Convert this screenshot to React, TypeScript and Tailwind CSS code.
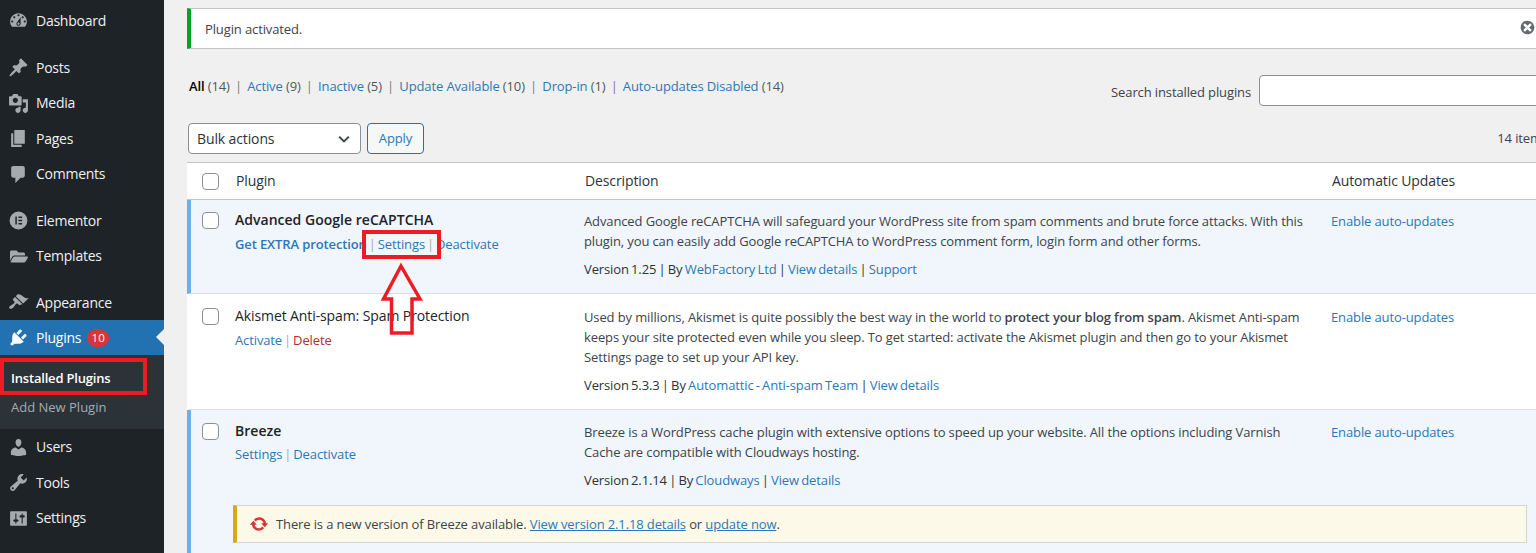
import React from "react";
import { FaFolderOpen } from "react-icons/fa";

const P: Record<string, string> = {
  dashboard: "M3.76 16h12.48c1.1-1.37 1.76-3.11 1.76-5 0-4.42-3.58-8-8-8s-8 3.58-8 8c0 1.89.66 3.63 1.76 5zM10 4c.55 0 1 .45 1 1s-.45 1-1 1-1-.45-1-1 .45-1 1-1zM6 6c.55 0 1 .45 1 1s-.45 1-1 1-1-.45-1-1 .45-1 1-1zm8 0c.55 0 1 .45 1 1s-.45 1-1 1-1-.45-1-1 .45-1 1-1zm-5.37 5.55L12 7v6c0 1.1-.9 2-2 2s-2-.9-2-2c0-.57.24-1.08.63-1.45zM4 10c.55 0 1 .45 1 1s-.45 1-1 1-1-.45-1-1 .45-1 1-1zm12 0c.55 0 1 .45 1 1s-.45 1-1 1-1-.45-1-1 .45-1 1-1zm-5 3c0-.55-.45-1-1-1s-1 .45-1 1 .45 1 1 1 1-.45 1-1z",
  post: "M10.44 3.02l1.82-1.82 6.36 6.35-1.83 1.82c-1.05-.68-2.48-.57-3.41.36l-.75.75c-.92.93-1.04 2.35-.35 3.41l-1.83 1.82-2.41-2.41-2.8 2.79c-.42.42-3.38 2.71-3.8 2.29s1.86-3.39 2.28-3.81l2.79-2.79L4.1 9.36l1.83-1.82c1.05.69 2.48.57 3.4-.36l.75-.75c.93-.92 1.05-2.35.36-3.41z",
  media: "M13 11V4c0-.55-.45-1-1-1h-1.67L9 1H5L3.67 3H2c-.55 0-1 .45-1 1v7c0 .55.45 1 1 1h10c.55 0 1-.45 1-1zM7 4.5c1.38 0 2.5 1.12 2.5 2.5S8.38 9.5 7 9.5 4.5 8.38 4.5 7 5.62 4.5 7 4.5zM14 6h5v10.5c0 1.38-1.12 2.5-2.5 2.5S14 17.88 14 16.5s1.12-2.5 2.5-2.5c.17 0 .34.02.5.05V9h-3V6zm-4 8.05V13h2v3.5c0 1.38-1.12 2.5-2.5 2.5S7 17.88 7 16.5 8.12 14 9.5 14c.17 0 .34.02.5.05z",
  page: "M6 15V2h10v13H6zm-1 1h8v2H3V5h2v11z",
  comments: "M5 2h9c1.1 0 2 .9 2 2v7c0 1.1-.9 2-2 2h-2l-5 5v-5H5c-1.1 0-2-.9-2-2V4c0-1.1.9-2 2-2z",
  appearance: "M14.48 11.06L7.41 3.99l1.5-1.5c.5-.56 2.3-.47 3.51.32 1.21.8 1.43 1.28 2.91 2.1 1.18.64 2.45 1.26 4.45.85zm-.71.71L6.7 4.7 4.93 6.47c-.39.39-.39 1.02 0 1.41l1.06 1.06c.39.39.39 1.03 0 1.42-.6.6-1.43 1.11-2.21 1.69-.35.26-.7.53-1.01.84C1.43 13.23.75 15.08 1.43 15.76c.68.68 2.53 0 3.87-1.34.31-.31.58-.66.84-1.01.58-.78 1.09-1.61 1.69-2.21.39-.39 1.03-.39 1.42 0l1.06 1.06c.39.39 1.02.39 1.41 0z",
  plugins: "M13.11 4.36L9.87 7.6 8 5.73l3.24-3.24c.35-.34 1.05-.2 1.56.32.52.51.66 1.21.31 1.55zm-8 1.77l.91-1.12 9.01 9.01-1.19.84c-.71.71-2.63 1.16-3.82 1.16H6.14L4.9 17.26c-.59.59-1.54.59-2.12 0-.59-.58-.59-1.53 0-2.12l1.24-1.24v-3.88c0-1.13.4-3.19 1.09-3.89zm7.26 3.97l3.24-3.24c.34-.35 1.04-.21 1.55.31.52.51.66 1.21.31 1.55l-3.24 3.25z",
  users: "M10 9.25c-2.27 0-2.73-3.44-2.73-3.44C7 4.02 7.82 2 9.97 2c2.16 0 2.98 2.02 2.71 3.81 0 0-.41 3.44-2.68 3.44zm0 2.57L12.72 10c2.39 0 4.52 2.33 4.52 4.53v2.49s-3.65 1.13-7.24 1.13c-3.65 0-7.24-1.13-7.24-1.13v-2.49c0-2.25 1.94-4.53 4.47-4.53z",
  tools: "M16.68 9.77c-1.34 1.34-3.3 1.67-4.95.99l-5.41 6.52c-.99.99-2.59.99-3.58 0s-.99-2.59 0-3.57l6.52-5.42c-.68-1.65-.35-3.61.99-4.95 1.28-1.28 3.12-1.62 4.72-1.06l-2.89 2.89 2.82 2.82 2.86-2.87c.53 1.58.18 3.39-1.08 4.65zM3.81 16.21c.4.39 1.04.39 1.43 0 .4-.4.4-1.04 0-1.43-.39-.4-1.03-.4-1.43 0-.39.39-.39 1.03 0 1.43z",
  settings: "M18 16V4c0-.55-.45-1-1-1H3c-.55 0-1 .45-1 1v12c0 .55.45 1 1 1h14c.55 0 1-.45 1-1zM8 11h1c.55 0 1 .45 1 1s-.45 1-1 1H8v1.5c0 .28-.22.5-.5.5s-.5-.22-.5-.5V13H6c-.55 0-1-.45-1-1s.45-1 1-1h1V5.5c0-.28.22-.5.5-.5s.5.22.5.5V11zm5-2h-1c-.55 0-1-.45-1-1s.45-1 1-1h1V5.5c0-.28.22-.5.5-.5s.5.22.5.5V7h1c.55 0 1 .45 1 1s-.45 1-1 1h-1v5.5c0 .28-.22.5-.5.5s-.5-.22-.5-.5V9z",
  elementor: "M10 1.5a8.5 8.5 0 1 0 0 17 8.5 8.5 0 0 0 0-17zM7 6.2h1.4v7.6H7zm3 0h3.4v1.5H10zm0 3.05h3.4v1.5H10zm0 3.05h3.4v1.5H10z",
  update: "M10.2 3.28c3.53 0 6.43 2.61 6.92 6h2.08l-3.5 4-3.5-4h2.32c-.45-1.97-2.21-3.45-4.32-3.45-1.45 0-2.73.71-3.54 1.78L4.95 5.66C6.23 4.2 8.11 3.28 10.2 3.28zm-.4 13.44c-3.52 0-6.43-2.61-6.92-6H.8l3.5-4c1.17 1.33 2.33 2.67 3.5 4H5.48c.45 1.97 2.21 3.45 4.32 3.45 1.45 0 2.73-.71 3.54-1.78l1.71 1.95c-1.28 1.46-3.15 2.38-5.25 2.38z",
  dismiss: "M10 2c4.42 0 8 3.58 8 8s-3.58 8-8 8-8-3.58-8-8 3.58-8 8-8zm5 11l-3-3 3-3-2-2-3 3-3-3-2 2 3 3-3 3 2 2 3-3 3 3z",
};

function Dash({ name, className }: { name: string; className?: string }) {
  return (
    <svg viewBox="0 0 20 20" fill="currentColor" fillRule="evenodd" className={className}>
      <path d={P[name]} />
    </svg>
  );
}

function MenuItem({ icon, label, outer = "h-[35.5px]", active = false, badge }: { icon: string; label: string; outer?: string; active?: boolean; badge?: string }) {
  return (
    <div className={`relative flex items-center ${outer} ${active ? "bg-[#2271b1] text-white" : "text-[#f0f0f1]"}`}>
      <div className={`flex w-[36px] shrink-0 justify-center ${active ? "text-white" : "text-[#a7aaad]"}`}>
        {icon === "folder" ? <FaFolderOpen className="h-[19px] w-[19px] pl-px" /> : <Dash name={icon} className="h-[21px] w-[21px]" />}
      </div>
      <span className="text-[14px] leading-none tracking-[-0.25px]">{label}</span>
      {badge && (
        <span className="ml-[6px] flex h-[18px] w-[22px] items-center justify-center rounded-full bg-[#d63638] text-[11.5px] text-white">
          {badge}
        </span>
      )}
      {active && <span className="absolute right-0 top-1/2 h-0 w-0 -translate-y-1/2 border-y-[8px] border-r-[8px] border-y-transparent border-r-[#f0f0f1]" />}
    </div>
  );
}

function Sep() {
  return <span className="mx-[5.2px] text-[#787c82]">|</span>;
}

function ASep() {
  return <span className="mx-[2px] text-[#a7aaad]">|</span>;
}

function Check() {
  return <span className="block h-[17px] w-[17px] rounded-[4px] border border-[#8c8f94] bg-white" />;
}

function A({ children, className = "" }: { children: React.ReactNode; className?: string }) {
  return <span className={`text-[#2b78b6] ${className}`}>{children}</span>;
}

function Row({
  active,
  name,
  actions,
  desc,
  version,
  className,
  actionsGap = "mt-[4px]",
  children,
}: {
  active?: boolean;
  name: string;
  actions: React.ReactNode;
  desc: React.ReactNode;
  version: React.ReactNode;
  className: string;
  actionsGap?: string;
  children?: React.ReactNode;
}) {
  return (
    <div className={`${active ? "border-l-4 border-l-[#72aee6] bg-[#f0f6fc]" : "border-l-4 border-l-white bg-white"} border-b border-b-[#dcdcde] ${className}`}>
      <div className="grid grid-cols-[44px_349px_747px_1fr]">
        <div className="pl-[11px] pt-[12px]">
          <Check />
        </div>
        <div className="pt-[10px]">
          <div className={`text-[14px] leading-[20px] text-[#1d2327] ${active ? "font-semibold tracking-[0.02px]" : "tracking-[-0.1px]"}`}>{name}</div>
          <div className={`${actionsGap} text-[13px] leading-[20px]`}>{actions}</div>
        </div>
        <div className="pt-[11px] text-[13px] leading-[20px] text-[#3c434a]">
          <div>{desc}</div>
          <div className="mt-[8px] text-[#2c3338] [word-spacing:-1px]">{version}</div>
        </div>
        <div className="pt-[11px] text-[13px] leading-[20px]">
          <A>Enable auto-updates</A>
        </div>
      </div>
      {children}
    </div>
  );
}

export default function App() {
  return (
    <div className="flex h-[553px] w-[1536px] overflow-hidden bg-[#f0f0f1] font-['Open_Sans','Liberation_Sans',sans-serif] text-[13px] text-[#3c434a]">
      <aside className="w-[164px] shrink-0 bg-[#1d2327] pt-[3px]">
        <MenuItem icon="dashboard" label="Dashboard" />
        <MenuItem icon="post" label="Posts" outer="h-[35.5px] mt-[11.6px]" />
        <MenuItem icon="media" label="Media" />
        <MenuItem icon="page" label="Pages" />
        <MenuItem icon="comments" label="Comments" />
        <MenuItem icon="elementor" label="Elementor" outer="h-[35.5px] mt-[10.7px]" />
        <MenuItem icon="folder" label="Templates" />
        <MenuItem icon="appearance" label="Appearance" outer="h-[34.75px] mt-[11.45px]" />
        <MenuItem icon="plugins" label="Plugins" outer="h-[35px] pt-[1px]" active badge="10" />
        <div className="h-[74.3px] bg-[#2c3338] pl-[11px] pt-[14px] text-[13px]">
          <div className="font-semibold leading-[18px] tracking-[-0.2px] text-white">Installed Plugins</div>
          <div className="mt-[11px] leading-[18px] text-[#a7aaad]">Add New Plugin</div>
        </div>
        <MenuItem icon="users" label="Users" />
        <MenuItem icon="tools" label="Tools" />
        <MenuItem icon="settings" label="Settings" />
      </aside>

      <main className="relative w-[1372px] min-w-0 shrink-0 overflow-hidden tracking-[-0.12px]">
        <div className="ml-[23px] w-[1361px] pt-[8px]">
          <div className="flex h-[41px] items-center justify-between border border-[#c3c4c7] border-l-4 border-l-[#00a32a] bg-white pl-[14px] pr-[11px]">
            <span className="pt-[2px]">Plugin activated.</span>
            <Dash name="dismiss" className="mb-[2px] h-[17px] w-[17px] text-[#646970]" />
          </div>

          <div className="mt-[26px] flex h-[32px] items-start justify-between">
            <div className="pl-[2px] pt-[2px]">
              <b className="font-semibold text-black">All</b> <span className="text-[#50575e]">(14)</span>
              <Sep />
              <A>Active</A> <span className="text-[#50575e]">(9)</span>
              <Sep />
              <A>Inactive</A> <span className="text-[#50575e]">(5)</span>
              <Sep />
              <A>Update Available</A> <span className="text-[#50575e]">(10)</span>
              <Sep />
              <A>Drop-in</A> <span className="text-[#50575e]">(1)</span>
              <Sep />
              <A>Auto-updates Disabled</A> <span className="text-[#50575e]">(14)</span>
            </div>
            <div className="flex items-start">
              <span className="mr-[8px] pt-[8px]">Search installed plugins</span>
              <div className="h-[31px] w-[289px] rounded-[4px] border border-[#8c8f94] bg-white" />
            </div>
          </div>

          <div className="mt-[16px] flex h-[31px] items-center justify-between">
            <div className="flex items-center">
              <div className="ml-px flex h-[31px] w-[173px] items-center justify-between rounded-[4px] border border-[#8c8f94] bg-white pl-[8px] pr-[8px] text-[14px] text-[#2c3338]">
                Bulk actions
                <svg viewBox="0 0 20 20" className="h-[16px] w-[16px]" fill="none" stroke="#3c434a" strokeWidth="2.4">
                  <path d="M4 7l6 6 6-6" />
                </svg>
              </div>
              <div className="ml-[6px] flex h-[31px] w-[57px] items-center justify-center rounded-[4px] border border-[#2271b1] bg-[#f6f7f7] text-[#2b78b6]">Apply</div>
            </div>
            <span>14 items</span>
          </div>

          <div className="mt-[8px] border-t border-[#c3c4c7]">
            <div className="grid h-[37px] grid-cols-[48px_349px_747px_1fr] items-center border-b border-b-[#c3c4c7] bg-white text-[14px]">
              <div className="pl-[15px]">
                <Check />
              </div>
              <div className="pb-[2px] pl-px text-[#2c3338]">Plugin</div>
              <div className="pb-[2px] pl-px text-[#2c3338]">Description</div>
              <div className="pb-[2px] pl-px text-[#2c3338]">Automatic Updates</div>
            </div>

            <Row
              active
              className="h-[94px]"
              name="Advanced Google reCAPTCHA"
              actions={
                <>
                  <A className="font-semibold">Get EXTRA protection</A>
                  <ASep />
                  <A>Settings</A>
                  <ASep />
                  <A>Deactivate</A>
                </>
              }
              desc={
                <>
                  Advanced Google reCAPTCHA will safeguard your WordPress site from spam comments and brute force attacks. With this
                  <br />
                  plugin, you can easily add Google reCAPTCHA to WordPress comment form, login form and other forms.
                </>
              }
              version={
                <>
                  Version 1.25 | By <A>WebFactory Ltd</A> | <A>View details</A> | <A>Support</A>
                </>
              }
            />
            <Row
              className="h-[116px] pt-[2px]"
              name="Akismet Anti-spam: Spam Protection"
              actions={
                <>
                  <A>Activate</A>
                  <ASep />
                  <span className="text-[#b32d2e]">Delete</span>
                </>
              }
              desc={
                <>
                  Used by millions, Akismet is quite possibly the best way in the world to <b className="font-semibold">protect your blog from spam</b>. Akismet Anti-spam
                  <br />
                  keeps your site protected even while you sleep. To get started: activate the Akismet plugin and then go to your Akismet
                  <br />
                  Settings page to set up your API key.
                </>
              }
              version={
                <>
                  Version 5.3.3 | By <A>Automattic - Anti-spam Team</A> | <A>View details</A>
                </>
              }
            />
            <Row
              active
              className="h-[160px] pt-[1px]"
              name="Breeze"
              actionsGap="mt-[3px]"
              actions={
                <>
                  <A>Settings</A>
                  <ASep />
                  <A>Deactivate</A>
                </>
              }
              desc={
                <>
                  Breeze is a WordPress cache plugin with extensive options to speed up your website. All the options including Varnish
                  <br />
                  Cache are compatible with Cloudways hosting.
                </>
              }
              version={
                <>
                  Version 2.1.14 | By <A>Cloudways</A> | <A>View details</A>
                </>
              }
            >
              <div className="ml-[42px] mt-[15px] flex h-[38px] w-[1294px] items-center border border-[#d5d5d5] border-l-4 border-l-[#dba617] bg-[#fcf9e8] pl-[12px]">
                <Dash name="update" className="mr-[7px] h-[20px] w-[20px] text-[#d63638]" />
                <span className="pt-[1px]">
                  There is a new version of Breeze available. <span className="text-[#2b78b6] underline">View version 2.1.18 details</span> or <span className="text-[#2b78b6] underline">update now</span>.
                </span>
              </div>
            </Row>
          </div>
        </div>
      </main>

      <div className="absolute left-0 top-[358px] h-[37px] w-[147px] border-[4px] border-[#ed1c24]" />
      <div className="absolute left-[362px] top-[230px] h-[29px] w-[79px] border-[4px] border-[#ed1c24]" />
      <svg className="absolute left-[378px] top-[262px]" width="48" height="76" viewBox="0 0 48 76" fill="none" stroke="#ed1c24" strokeWidth="3.5">
        <path d="M23 4L5.5 37H13.5V71H34V37H42Z" />
      </svg>
    </div>
  );
}
